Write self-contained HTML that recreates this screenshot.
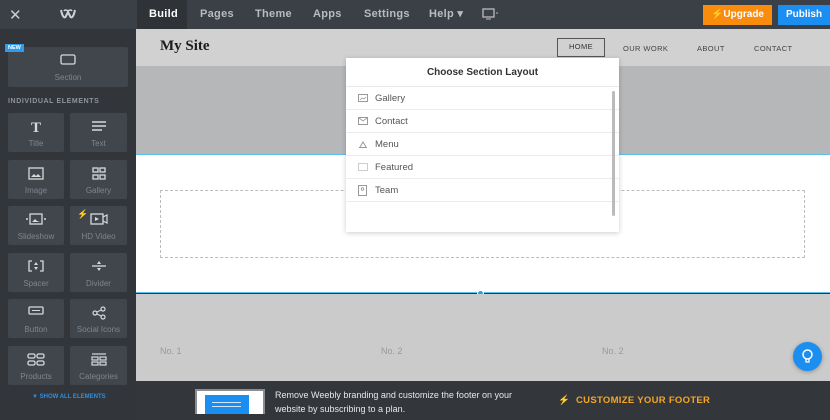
<!DOCTYPE html>
<html><head><meta charset="utf-8"><style>
*{margin:0;padding:0;box-sizing:border-box}
body{width:830px;height:420px;overflow:hidden;position:relative;font-family:"Liberation Sans",sans-serif;background:#32363b}
.a{position:absolute}
.top{left:0;top:0;width:830px;height:29px;background:#3b4047}
.tab{top:0;height:29px;line-height:29px;color:#b8bcc2;font-size:11px;font-weight:bold;letter-spacing:.3px}
.tile{background:#41464d;border-radius:2px;width:56px;height:39px}
.tile span{position:absolute;left:0;right:0;top:26px;text-align:center;font-size:8px;color:#7f858d}
.tile svg{position:absolute;left:50%;top:7px;transform:translateX(-50%)}
.row{left:0;right:0;height:23px;border-bottom:1px solid #ececec;font-size:9.5px;color:#555;line-height:23px;padding-left:29px}
.row svg{position:absolute;left:12px;top:7px}
</style></head><body>
<div class="a top"></div>
<div class="a" style="left:0;top:29px;width:136px;height:391px;background:#32363b"></div>
<div class="a" style="left:9px;top:6px;color:#c9ccd0;font-size:15px">✕</div>
<svg class="a" style="left:60px;top:8px" width="16" height="12" viewBox="0 0 16 12"><path d="M1 2 Q3 11 5.5 9 Q7 6 8 4 Q9 6 10.5 9 Q13 11 15 2" fill="none" stroke="#d0d3d6" stroke-width="2"/><path d="M4 3 Q5 1 8 3 Q11 1 12 3" fill="none" stroke="#d0d3d6" stroke-width="1.6"/></svg>
<div class="a" style="left:137px;top:0;width:50px;height:29px;background:#2f3338"></div>
<div class="a tab" style="left:149px;color:#fff">Build</div>
<div class="a tab" style="left:200px">Pages</div>
<div class="a tab" style="left:255px">Theme</div>
<div class="a tab" style="left:313px">Apps</div>
<div class="a tab" style="left:364px">Settings</div>
<div class="a tab" style="left:429px">Help ▾</div>
<svg class="a" style="left:482px;top:8px" width="18" height="12"><rect x="1" y="1" width="11" height="8" fill="none" stroke="#b8bcc2" stroke-width="1.3"/><path d="M4 11h5" stroke="#b8bcc2"/><path d="M14 5l2 0" stroke="#b8bcc2"/></svg>
<div class="a" style="left:703px;top:5px;width:69px;height:20px;background:#f98b0d;color:#fff;font-size:10px;font-weight:bold;text-align:center;line-height:20px">⚡Upgrade</div>
<div class="a" style="left:778px;top:5px;width:52px;height:20px;background:#1b8ef2;color:#fff;font-size:10px;font-weight:bold;text-align:center;line-height:20px">Publish</div>

<!-- sidebar -->
<div class="a tile" style="left:8px;top:47px;width:120px;height:40px"><svg width="16" height="11"><rect x="1" y="1" width="14" height="9" rx="1.5" fill="none" stroke="#d6d9dc" stroke-width="1.3"/></svg><span>Section</span></div>
<div class="a" style="left:5px;top:44px;background:#2f9be9;color:#fff;font-size:5.5px;font-weight:bold;padding:1px 3px">NEW</div>
<div class="a" style="left:8px;top:98px;font-size:7px;color:#8e949b;font-weight:bold;letter-spacing:.6px">INDIVIDUAL ELEMENTS</div>
<div class="a tile" style="left:8px;top:113px"><svg width="14" height="14"><text x="7" y="12" font-size="15" font-weight="bold" fill="#d6d9dc" text-anchor="middle" font-family="Liberation Serif">T</text></svg><span>Title</span></div>
<div class="a tile" style="left:70px;top:113px;width:57px"><svg width="16" height="12"><path d="M1 2h14M1 6h14M1 10h10" stroke="#d6d9dc" stroke-width="1.4"/></svg><span>Text</span></div>
<div class="a tile" style="left:8px;top:160px"><svg width="16" height="13"><rect x="1" y="1" width="14" height="11" fill="none" stroke="#d6d9dc" stroke-width="1.3"/><path d="M3 10l3-3 2 2 2-2 3 3z" fill="#d6d9dc"/></svg><span>Image</span></div>
<div class="a tile" style="left:70px;top:160px;width:57px"><svg width="14" height="13"><rect x="1" y="1" width="5" height="4" fill="none" stroke="#d6d9dc" stroke-width="1.3"/><rect x="8" y="1" width="5" height="4" fill="none" stroke="#d6d9dc" stroke-width="1.3"/><rect x="1" y="8" width="5" height="4" fill="none" stroke="#d6d9dc" stroke-width="1.3"/><rect x="8" y="8" width="5" height="4" fill="none" stroke="#d6d9dc" stroke-width="1.3"/></svg><span>Gallery</span></div>
<div class="a tile" style="left:8px;top:206px"><svg width="22" height="13"><rect x="5" y="1" width="12" height="10" fill="none" stroke="#d6d9dc" stroke-width="1.3"/><path d="M7 9l3-3 2 2 3 1z" fill="#d6d9dc"/><circle cx="2" cy="6" r="1" fill="#d6d9dc"/><circle cx="20" cy="6" r="1" fill="#d6d9dc"/></svg><span>Slideshow</span></div>
<div class="a tile" style="left:70px;top:206px;width:57px"><svg width="18" height="13"><rect x="1" y="1" width="12" height="10" fill="none" stroke="#d6d9dc" stroke-width="1.3"/><path d="M5 4l4 2-4 2z" fill="#d6d9dc"/><path d="M13 4l4-2v8l-4-2" fill="none" stroke="#d6d9dc" stroke-width="1.2"/></svg><span>HD Video</span></div>
<div class="a" style="left:77px;top:209px;color:#f5a623;font-size:9px">⚡</div>
<div class="a tile" style="left:8px;top:253px"><svg width="16" height="12"><path d="M4 1H1v10h3M12 1h3v10h-3" fill="none" stroke="#d6d9dc" stroke-width="1.3"/><path d="M8 2l-2 3h4zM8 10l-2-3h4z" fill="#d6d9dc"/></svg><span>Spacer</span></div>
<div class="a tile" style="left:70px;top:253px;width:57px"><svg width="16" height="12"><path d="M1 6h14" stroke="#d6d9dc" stroke-width="1.3"/><path d="M8 1l-2 3h4zM8 11l-2-3h4z" fill="#d6d9dc"/></svg><span>Divider</span></div>
<div class="a tile" style="left:8px;top:299px"><svg width="16" height="10"><rect x="1" y="1" width="14" height="7" rx="1" fill="none" stroke="#d6d9dc" stroke-width="1.3"/><path d="M4 4.5h8" stroke="#d6d9dc"/></svg><span>Button</span></div>
<div class="a tile" style="left:70px;top:299px;width:57px"><svg width="14" height="14"><circle cx="3" cy="7" r="2" fill="none" stroke="#d6d9dc" stroke-width="1.2"/><circle cx="11" cy="3" r="2" fill="none" stroke="#d6d9dc" stroke-width="1.2"/><circle cx="11" cy="11" r="2" fill="none" stroke="#d6d9dc" stroke-width="1.2"/><path d="M5 6l4-2M5 8l4 2" stroke="#d6d9dc"/></svg><span>Social Icons</span></div>
<div class="a tile" style="left:8px;top:346px"><svg width="18" height="13"><rect x="1" y="1" width="7" height="4" rx="1.5" fill="none" stroke="#d6d9dc" stroke-width="1.3"/><rect x="10" y="1" width="7" height="4" rx="1.5" fill="none" stroke="#d6d9dc" stroke-width="1.3"/><rect x="1" y="8" width="7" height="4" rx="1.5" fill="none" stroke="#d6d9dc" stroke-width="1.3"/><rect x="10" y="8" width="7" height="4" rx="1.5" fill="none" stroke="#d6d9dc" stroke-width="1.3"/></svg><span>Products</span></div>
<div class="a tile" style="left:70px;top:346px;width:57px"><svg width="16" height="14"><path d="M1 1h14" stroke="#d6d9dc" stroke-width="1.2"/><rect x="1" y="4" width="6" height="3" fill="none" stroke="#d6d9dc" stroke-width="1.2"/><rect x="9" y="4" width="6" height="3" fill="none" stroke="#d6d9dc" stroke-width="1.2"/><rect x="1" y="9" width="6" height="3" fill="none" stroke="#d6d9dc" stroke-width="1.2"/><rect x="9" y="9" width="6" height="3" fill="none" stroke="#d6d9dc" stroke-width="1.2"/></svg><span>Categories</span></div>
<div class="a" style="left:32px;top:394px;font-size:6px;color:#2e8fdf;font-weight:bold">▼ SHOW ALL ELEMENTS</div>

<!-- canvas -->
<div class="a" style="left:136px;top:29px;width:694px;height:37px;background:#d1d1d1"></div>
<div class="a" style="left:160px;top:38px;font-family:'Liberation Serif',serif;font-weight:bold;font-size:15px;color:#1c1c1c">My Site</div>
<div class="a" style="left:557px;top:38px;width:48px;height:19px;border:1.5px solid #555;font-size:7.5px;color:#333;text-align:center;line-height:16px;letter-spacing:.4px">HOME</div>
<div class="a" style="left:623px;top:44px;font-size:7.5px;color:#444;letter-spacing:.4px">OUR WORK</div>
<div class="a" style="left:697px;top:44px;font-size:7.5px;color:#444;letter-spacing:.4px">ABOUT</div>
<div class="a" style="left:754px;top:44px;font-size:7.5px;color:#444;letter-spacing:.4px">CONTACT</div>
<div class="a" style="left:136px;top:66px;width:694px;height:88px;background:#b5b7b9"></div>
<div class="a" style="left:136px;top:154px;width:694px;height:139px;background:#fff;border-top:1.5px solid #5bc0eb;border-bottom:1.5px solid #5bc0eb"></div>
<div class="a" style="left:160px;top:190px;width:645px;height:68px;border:1px dashed #bbb"></div>
<div class="a" style="left:477px;top:290px;width:7px;height:7px;border-radius:50%;background:#2c9be6;border:1px solid #fff"></div>
<div class="a" style="left:136px;top:294px;width:694px;height:87px;background:#cbcbcb"></div>
<div class="a" style="left:160px;top:346px;font-size:9px;color:#999">No. 1</div>
<div class="a" style="left:381px;top:346px;font-size:9px;color:#999">No. 2</div>
<div class="a" style="left:602px;top:346px;font-size:9px;color:#999">No. 2</div>
<div class="a" style="left:793px;top:342px;width:29px;height:29px;border-radius:50%;background:#1b8ef2;box-shadow:0 1px 4px rgba(0,0,0,.3)"><svg width="29" height="29"><circle cx="14.5" cy="12.5" r="4.5" fill="none" stroke="#fff" stroke-width="1.5"/><path d="M13 17v3h3v-3" fill="none" stroke="#fff" stroke-width="1.3"/></svg></div>

<!-- popup -->
<div class="a" style="left:346px;top:58px;width:273px;height:174px;background:#fff;box-shadow:0 1px 5px rgba(0,0,0,.2)">
<div class="a" style="left:0;right:0;top:0;height:29px;border-bottom:1px solid #e8e8e8;text-align:center;line-height:29px;font-size:10px;font-weight:bold;color:#333">Choose Section Layout</div>
<div class="a row" style="top:29px"><svg width="10" height="8"><rect x=".5" y=".5" width="9" height="7" fill="none" stroke="#999"/><path d="M2 6l2-2 2 1 2-2" fill="none" stroke="#999" stroke-width=".8"/></svg>Gallery</div>
<div class="a row" style="top:52px"><svg width="10" height="8"><rect x=".5" y=".5" width="9" height="7" fill="none" stroke="#999"/><path d="M1 1l4 3 4-3" fill="none" stroke="#999" stroke-width=".8"/></svg>Contact</div>
<div class="a row" style="top:75px"><svg width="10" height="8"><path d="M1 7.5h8M2 7l3-5 3 5" fill="none" stroke="#999"/></svg>Menu</div>
<div class="a row" style="top:98px"><svg width="10" height="8"><rect x=".5" y=".5" width="9" height="7" fill="none" stroke="#999" stroke-dasharray="1 1"/></svg>Featured</div>
<div class="a row" style="top:121px"><svg width="10" height="11" style="top:6px"><rect x=".5" y=".5" width="8" height="10" fill="none" stroke="#999"/><circle cx="4.5" cy="4" r="1.3" fill="none" stroke="#999" stroke-width=".8"/></svg>Team</div>
<div class="a" style="left:266px;top:33px;width:3px;height:125px;background:#bbb;border-radius:2px"></div>
</div>

<!-- bottom bar -->
<div class="a" style="left:136px;top:381px;width:694px;height:39px;background:#33373c"></div>
<div class="a" style="left:195px;top:389px;width:70px;height:25px;background:#fff;border:2px solid #8a8d91;border-bottom:none"></div>
<div class="a" style="left:205px;top:395px;width:44px;height:19px;background:#1b8ef2"></div>
<div class="a" style="left:212px;top:402px;width:29px;height:1px;background:#cfe6fb"></div>
<div class="a" style="left:212px;top:406px;width:29px;height:1px;background:#cfe6fb"></div>
<div class="a" style="left:275px;top:388px;font-size:9px;color:#e6e8ea;line-height:14px">Remove Weebly branding and customize the footer on your<br>website by subscribing to a plan.</div>
<div class="a" style="left:558px;top:395px;font-size:9.5px;color:#f5a623;font-weight:bold;letter-spacing:.3px">⚡&nbsp;&nbsp;CUSTOMIZE YOUR FOOTER</div>
</body></html>
